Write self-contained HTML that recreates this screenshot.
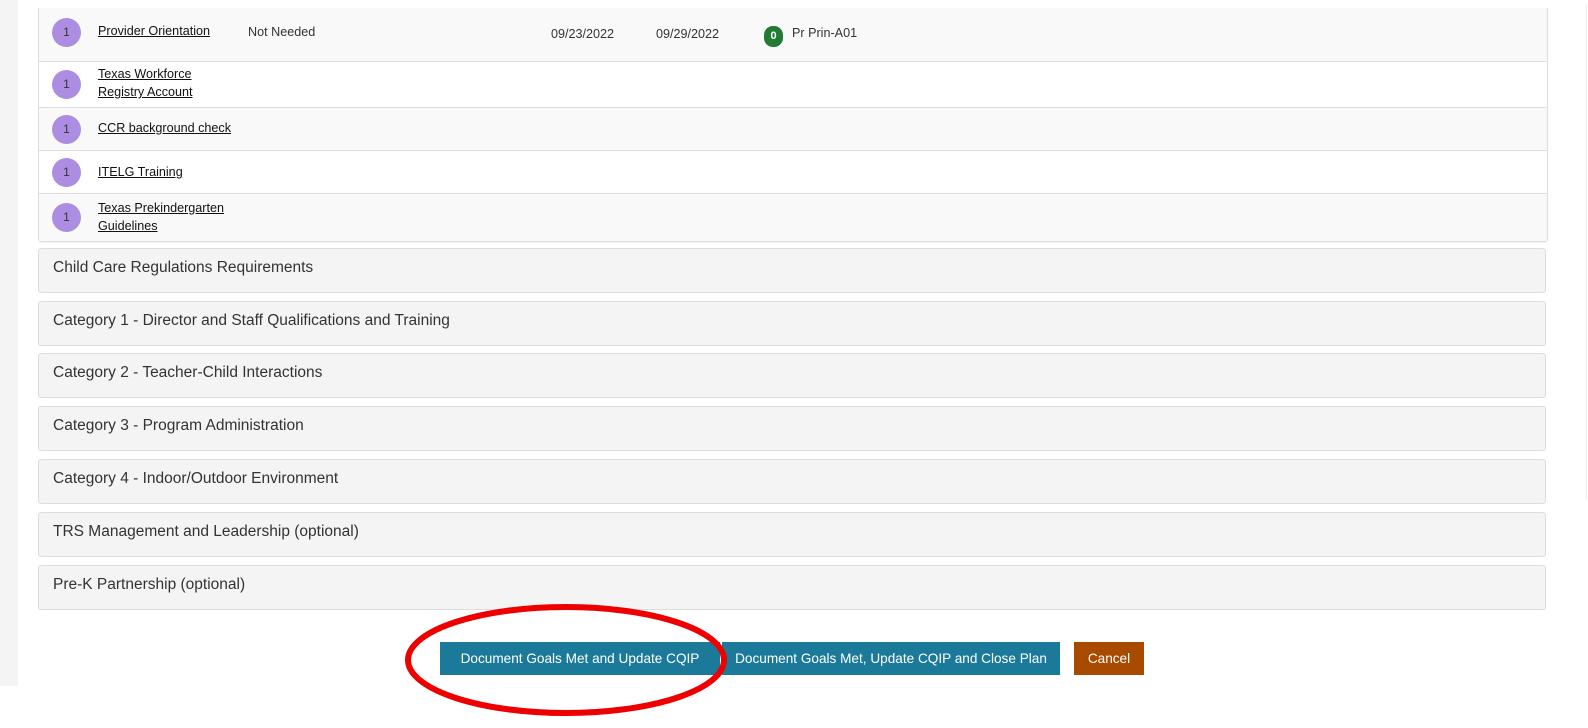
<!DOCTYPE html>
<html><head><style>
body{margin:0;width:1588px;height:728px;background:#fff;font-family:"Liberation Sans",Arial,sans-serif;position:relative;overflow:hidden}
.lstrip{position:absolute;left:0;top:0;width:18px;height:686px;background:#f4f4f4}
.rline{position:absolute;left:1586px;top:5px;width:1px;height:495px;background:#eee}
.panel{position:absolute;left:38px;top:8px;width:1508px;border:1px solid #ddd;border-top:none;border-radius:0 0 3px 3px;box-shadow:0 1px 1px rgba(0,0,0,.05)}
.row{position:relative;border-bottom:1px solid #ddd;background:#f9f9f9}
.row.w{background:#fff}
.row:last-child{border-bottom:none}
.num{position:absolute;left:13px;width:29px;height:29px;border-radius:50%;background:#ad8de2;color:#333;font-size:12px;text-align:center;line-height:29px}
.lnk{position:absolute;left:59px;font-size:12.6px;color:#111;text-decoration:underline;line-height:18px}
.t{position:absolute;font-size:12.6px;color:#333}
.badge{position:absolute;left:725px;top:18px;width:19px;height:21px;border-radius:9px;background:#237a35;color:#fff;font-size:11px;font-weight:bold;text-align:center;line-height:21px}
.hd{position:absolute;left:38px;width:1508px;height:45px;background:#f4f4f4;border:1px solid #ddd;border-radius:3px;font-size:15.5px;color:#333;box-sizing:border-box;padding:10px 0 0 14px}
.btn{position:absolute;top:642px;height:33px;background:#1b7a99;color:#fff;font-size:13.6px;line-height:33px;text-align:center;white-space:nowrap}
</style></head><body>
<div class="lstrip"></div><div class="rline"></div>
<div class="panel">
 <div class="row" style="height:53px"><div class="num" style="top:10px">1</div><a class="lnk" style="top:14px">Provider Orientation</a><span class="t" style="left:209px;top:17px">Not Needed</span><span class="t" style="left:512px;top:19px">09/23/2022</span><span class="t" style="left:617px;top:19px">09/29/2022</span><div class="badge">0</div><span class="t" style="left:753px;top:18px">Pr Prin-A01</span></div>
 <div class="row w" style="height:45px"><div class="num" style="top:8px">1</div><a class="lnk" style="top:3px">Texas Workforce<br>Registry Account</a></div>
 <div class="row" style="height:42px"><div class="num" style="top:7px">1</div><a class="lnk" style="top:11px">CCR background check</a></div>
 <div class="row w" style="height:42px"><div class="num" style="top:7px">1</div><a class="lnk" style="top:12px">ITELG Training</a></div>
 <div class="row" style="height:47px"><div class="num" style="top:9px">1</div><a class="lnk" style="top:5px">Texas Prekindergarten<br>Guidelines</a></div>
</div>
<div class="hd" style="top:248px">Child Care Regulations Requirements</div>
<div class="hd" style="top:301px">Category 1 - Director and Staff Qualifications and Training</div>
<div class="hd" style="top:353px">Category 2 - Teacher-Child Interactions</div>
<div class="hd" style="top:406px">Category 3 - Program Administration</div>
<div class="hd" style="top:459px">Category 4 - Indoor/Outdoor Environment</div>
<div class="hd" style="top:512px">TRS Management and Leadership (optional)</div>
<div class="hd" style="top:565px">Pre-K Partnership (optional)</div>
<div class="btn" style="left:440px;width:280px">Document Goals Met and Update CQIP</div>
<div class="btn" style="left:722px;width:338px">Document Goals Met, Update CQIP and Close Plan</div>
<div class="btn" style="left:1074px;width:70px;background:#a84b00">Cancel</div>
<svg style="position:absolute;left:0;top:0" width="1588" height="728"><ellipse cx="566" cy="660" rx="158" ry="53" fill="none" stroke="#e00" stroke-width="6"/></svg>
</body></html>
